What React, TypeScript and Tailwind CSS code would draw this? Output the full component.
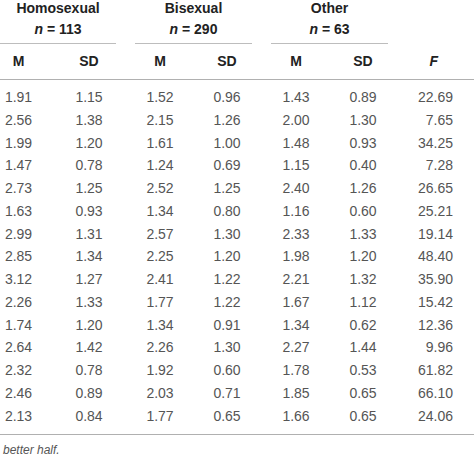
const GROUPS = [
  { name: "Homosexual", n: "113" },
  { name: "Bisexual", n: "290" },
  { name: "Other", n: "63" },
];

const ROWS: string[][] = [
  ["1.91", "1.15", "1.52", "0.96", "1.43", "0.89", "22.69"],
  ["2.56", "1.38", "2.15", "1.26", "2.00", "1.30", "7.65"],
  ["1.99", "1.20", "1.61", "1.00", "1.48", "0.93", "34.25"],
  ["1.47", "0.78", "1.24", "0.69", "1.15", "0.40", "7.28"],
  ["2.73", "1.25", "2.52", "1.25", "2.40", "1.26", "26.65"],
  ["1.63", "0.93", "1.34", "0.80", "1.16", "0.60", "25.21"],
  ["2.99", "1.31", "2.57", "1.30", "2.33", "1.33", "19.14"],
  ["2.85", "1.34", "2.25", "1.20", "1.98", "1.20", "48.40"],
  ["3.12", "1.27", "2.41", "1.22", "2.21", "1.32", "35.90"],
  ["2.26", "1.33", "1.77", "1.22", "1.67", "1.12", "15.42"],
  ["1.74", "1.20", "1.34", "0.91", "1.34", "0.62", "12.36"],
  ["2.64", "1.42", "2.26", "1.30", "2.27", "1.44", "9.96"],
  ["2.32", "0.78", "1.92", "0.60", "1.78", "0.53", "61.82"],
  ["2.46", "0.89", "2.03", "0.71", "1.85", "0.65", "66.10"],
  ["2.13", "0.84", "1.77", "0.65", "1.66", "0.65", "24.06"],
];

const COLS = "grid grid-cols-[37px_104px_38px_96px_42px_92px_1fr]";

function GroupHeader({ name, n, className }: { name: string; n: string; className: string }) {
  return (
    <div className={`border-b border-[#bdbdbd] pb-[3px] text-center ${className}`}>
      <div className="leading-[16px]">{name}</div>
      <div className="mt-[2px] leading-[22px]">
        <span className="italic">n</span> = {n}
      </div>
    </div>
  );
}

export default function App() {
  return (
    <div className="w-[474px] h-[474px] overflow-hidden bg-white font-['Liberation_Sans',Arial,sans-serif] text-[14px]">
      <div className="flex font-bold text-[#222]">
        {GROUPS.map((g, i) => (
          <GroupHeader
            key={g.name}
            name={g.name}
            n={g.n}
            className={i === 0 ? "w-[116px]" : "ml-[19px] w-[117px]"}
          />
        ))}
      </div>

      <div className={`${COLS} h-[36px] border-b border-[#b0b0b0] pb-[2px] font-bold leading-[34px] text-[#222]`}>
        <div className="text-center">M</div>
        <div className="text-center">SD</div>
        <div className="text-center">M</div>
        <div className="text-center">SD</div>
        <div className="text-center">M</div>
        <div className="text-center">SD</div>
        <div className="pr-[36px] text-right italic">F</div>
      </div>

      <div className="border-b border-[#b0b0b0] pt-[6px] pb-[7px] text-[#555]">
        {ROWS.map((row, r) => (
          <div key={r} className={`${COLS} h-[22.75px] leading-[22.75px]`}>
            {row.map((v, c) => (
              <div key={c} className={c === 6 ? "pr-[21px] text-right" : "text-center"}>
                {v}
              </div>
            ))}
          </div>
        ))}
      </div>

      <p className="mt-[7px] pl-[3px] text-[12px] leading-[16px] italic text-[#555]">better half.</p>
    </div>
  );
}
